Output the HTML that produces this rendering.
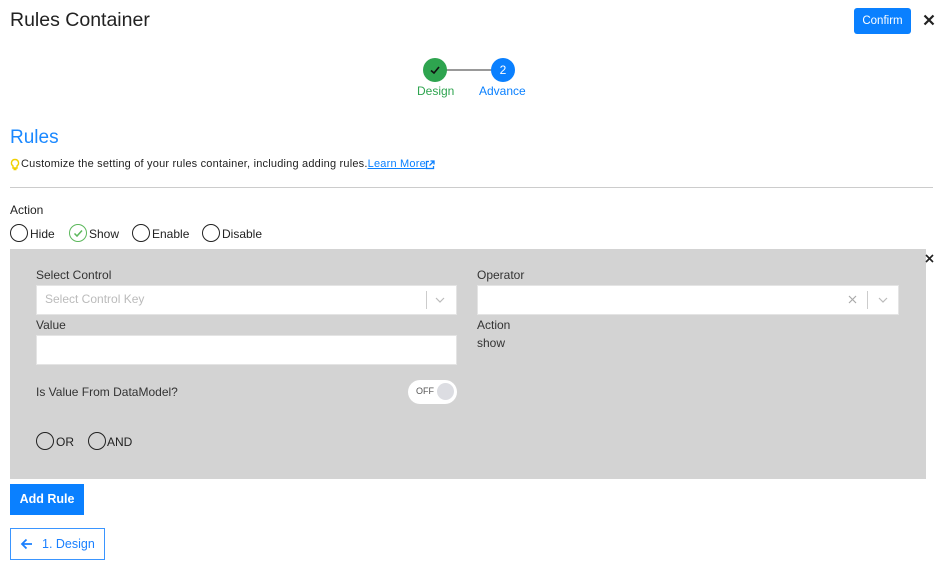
<!DOCTYPE html>
<html><head><meta charset="utf-8"><style>
*{margin:0;padding:0;box-sizing:border-box}
body{width:942px;height:568px;background:#fff;font-family:"Liberation Sans",sans-serif;color:#222;position:relative;overflow:hidden;font-size:12px}
.a{position:absolute;white-space:nowrap}
.rc{position:absolute;width:18px;height:18px;border:1.6px solid #222;border-radius:50%}
.box{position:absolute;background:#fff;border:1px solid #e4e4e4}
</style></head><body>
<div class="a" style="left:10px;top:9px;font-size:19.5px;color:#222">Rules Container</div>
<div class="a" style="left:854px;top:8px;width:57px;height:26px;background:#0a80ff;border-radius:3px;color:#fff;font-size:11.5px;line-height:26px;text-align:center">Confirm</div>
<svg class="a" style="left:923px;top:14px" width="12" height="12"><path d="M1.5 1.5L10.5 10.5M10.5 1.5L1.5 10.5" stroke="#222" stroke-width="2.2"/></svg>

<div class="a" style="left:445px;top:69px;width:48px;height:1.5px;background:#999"></div>
<div class="a" style="left:423px;top:58px;width:24px;height:24px;border-radius:50%;background:#2ea44f"></div>
<svg class="a" style="left:429px;top:64px" width="12" height="12"><path d="M2 6.5L5 9L10 3" stroke="#111" stroke-width="1.6" fill="none"/></svg>
<div class="a" style="left:491px;top:58px;width:24px;height:24px;border-radius:50%;background:#0a80ff;color:#fff;font-size:12px;line-height:24px;text-align:center">2</div>
<div class="a" style="left:417px;top:84px;color:#2ea44f;font-size:12px">Design</div>
<div class="a" style="left:479px;top:84px;color:#0a80ff;font-size:12px">Advance</div>

<div class="a" style="left:10px;top:127px;font-size:19px;color:#1a88ff">Rules</div>
<svg class="a" style="left:10px;top:158px" width="10" height="14"><path d="M5 1.5a3.5 3.5 0 0 0-2 6.4V10h4V7.9A3.5 3.5 0 0 0 5 1.5z M3.5 11.5h3" stroke="#f0d000" stroke-width="1.4" fill="none"/></svg>
<div class="a" style="left:21px;top:158px;font-size:11px;letter-spacing:0.2px;color:#222">Customize the setting of your rules container, including adding rules.<span style="color:#0a80ff;text-decoration:underline">Learn More</span></div>
<svg class="a" style="left:425px;top:160px" width="10" height="10"><path d="M4 1.5H1.5v7h7V6M5.5 1h3.5v3.5M9 1L4.5 5.5" stroke="#0a80ff" stroke-width="1.3" fill="none"/></svg>
<div class="a" style="left:10px;top:187px;width:923px;height:1px;background:#ccc"></div>

<div class="a" style="left:10px;top:203px;font-size:12px">Action</div>
<div class="rc" style="left:10px;top:224px"></div><div class="a" style="left:30px;top:227px;font-size:12px">Hide</div>
<div class="rc" style="left:69px;top:224px;border-color:#5cb85c"></div>
<svg class="a" style="left:72px;top:227px" width="12" height="12"><path d="M2.5 6.5L5 9L10 3.5" stroke="#5cb85c" stroke-width="1.5" fill="none"/></svg>
<div class="a" style="left:89px;top:227px;font-size:12px">Show</div>
<div class="rc" style="left:132px;top:224px"></div><div class="a" style="left:152px;top:227px;font-size:12px">Enable</div>
<div class="rc" style="left:202px;top:224px"></div><div class="a" style="left:222px;top:227px;font-size:12px">Disable</div>

<div class="a" style="left:10px;top:249px;width:916px;height:230px;background:#d3d3d3"></div>
<svg class="a" style="left:925px;top:254px" width="9" height="9"><path d="M1 1L8 8M8 1L1 8" stroke="#222" stroke-width="1.6"/></svg>
<div class="a" style="left:36px;top:268px;font-size:12px;color:#333">Select Control</div>
<div class="box" style="left:36px;top:285px;width:421px;height:30px"></div>
<div class="a" style="left:45px;top:292px;font-size:12px;color:#bbb">Select Control Key</div>
<div class="a" style="left:426px;top:291px;width:1px;height:18px;background:#ccc"></div>
<svg class="a" style="left:435px;top:296px" width="10" height="8"><path d="M1 2l4 4 4-4" stroke="#bbb" stroke-width="1.2" fill="none"/></svg>
<div class="a" style="left:36px;top:318px;font-size:12px;color:#333">Value</div>
<div class="box" style="left:36px;top:335px;width:421px;height:30px"></div>
<div class="a" style="left:36px;top:385px;font-size:12px;color:#333">Is Value From DataModel?</div>
<div class="a" style="left:408px;top:380px;width:49px;height:24px;border-radius:12px;background:#fff"></div>
<div class="a" style="left:416px;top:386px;font-size:9px;color:#555">OFF</div>
<div class="a" style="left:437px;top:383px;width:17px;height:17px;border-radius:50%;background:#dcdde2"></div>
<div class="rc" style="left:36px;top:432px"></div><div class="a" style="left:56px;top:435px;font-size:12px">OR</div>
<div class="rc" style="left:88px;top:432px"></div><div class="a" style="left:107px;top:435px;font-size:12px">AND</div>

<div class="a" style="left:477px;top:268px;font-size:12px;color:#333">Operator</div>
<div class="box" style="left:477px;top:285px;width:422px;height:30px"></div>
<svg class="a" style="left:848px;top:295px" width="9" height="9"><path d="M1 1L8 8M8 1L1 8" stroke="#aaa" stroke-width="1.2"/></svg>
<div class="a" style="left:867px;top:291px;width:1px;height:18px;background:#ccc"></div>
<svg class="a" style="left:878px;top:296px" width="10" height="8"><path d="M1 2l4 4 4-4" stroke="#bbb" stroke-width="1.2" fill="none"/></svg>
<div class="a" style="left:477px;top:318px;font-size:12px;color:#333">Action</div>
<div class="a" style="left:477px;top:336px;font-size:12px;color:#333">show</div>

<div class="a" style="left:10px;top:484px;width:74px;height:31px;background:#0a80ff;color:#fff;font-size:12.5px;font-weight:bold;line-height:31px;text-align:center">Add Rule</div>
<div class="a" style="left:10px;top:528px;width:95px;height:32px;border:1.5px solid #3a95ff"></div>
<svg class="a" style="left:20px;top:538px" width="13" height="12"><path d="M12 6H2M6.5 1.5L2 6l4.5 4.5" stroke="#1a80ff" stroke-width="1.8" fill="none"/></svg>
<div class="a" style="left:42px;top:537px;color:#1a80ff;font-size:12.5px">1. Design</div>
</body></html>
